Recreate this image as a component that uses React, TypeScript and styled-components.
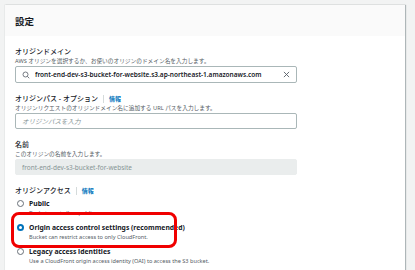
import { FunctionComponent } from 'react';
import styled, { createGlobalStyle } from 'styled-components';

const GlobalStyle = createGlobalStyle`
    html, body {
        margin: 0;
        padding: 0;
        background: rgb(242, 243, 243);
        font-family: "Noto Sans", "Noto Sans CJK JP", sans-serif;
        color: rgb(22, 25, 31);
    }
`;

const Page = styled.div`
    width: 415px;
    height: 270px;
    overflow: hidden;
    padding: 5px 0 0 5px;
    box-sizing: border-box;
`;

const Card = styled.div`
    width: 400px;
    height: 300px;
    background: rgb(255, 255, 255);
    box-shadow: 1px 0 1px rgba(0, 28, 36, 0.25), 0 0 0 0.5px rgba(0, 28, 36, 0.08);
`;

const Header = styled.div`
    height: 31px;
    display: flex;
    align-items: center;
    padding: 0 10px;
    background: rgb(250, 250, 250);
    font-size: 9.5px;
    font-weight: 700;
`;

const Body = styled.div`
    padding: 10px 10px 0 10px;
    display: flex;
    flex-direction: column;
    gap: 10px;
`;

const Field = styled.div`
    display: flex;
    flex-direction: column;
`;

const Label = styled.div`
    font-size: 7px;
    font-weight: 500;
    line-height: 11px;
    display: flex;
    align-items: center;
`;

const Info = styled.span`
    color: rgb(0, 115, 187);
    font-weight: 700;
    font-size: 6px;
    margin-left: 5px;
    padding-left: 5px;
    border-left: 1px solid rgb(213, 219, 219);
    line-height: 8px;
`;

const Description = styled.div`
    font-size: 5.7px;
    line-height: 9px;
    color: rgb(84, 91, 100);
`;

const InputBox = styled.div<{ $height: number; $disabled?: boolean }>`
    width: 282px;
    height: ${p => p.$height}px;
    box-sizing: border-box;
    display: flex;
    align-items: center;
    gap: 5px;
    padding: 0 6px;
    border: 1px solid ${p => (p.$disabled ? 'rgb(234, 237, 237)' : 'rgb(170, 183, 184)')};
    border-radius: 2px;
    background: ${p => (p.$disabled ? 'rgb(234, 237, 237)' : 'rgb(255, 255, 255)')};
    font-size: 6.5px;
`;

const InputText = styled.span<{ $tone?: 'value' | 'placeholder' | 'disabled' }>`
    flex: 1;
    white-space: nowrap;
    overflow: hidden;
    font-weight: ${p => (p.$tone === 'value' || !p.$tone ? 600 : 400)};
    font-style: ${p => (p.$tone === 'placeholder' ? 'italic' : 'normal')};
    color: ${p =>
        p.$tone === 'placeholder'
            ? 'rgb(135, 149, 150)'
            : p.$tone === 'disabled'
              ? 'rgb(135, 149, 150)'
              : 'rgb(22, 25, 31)'};
`;

const RadioGroup = styled.div`
    position: relative;
    display: flex;
    flex-direction: column;
    gap: 4px;
    margin-top: 2px;
`;

const RadioItem = styled.div`
    display: grid;
    grid-template-columns: 7px 1fr;
    column-gap: 5px;
    padding-left: 2px;
`;

const RadioDot = styled.span<{ $checked?: boolean }>`
    width: 7px;
    height: 7px;
    box-sizing: border-box;
    border-radius: 50%;
    margin-top: 2px;
    border: ${p => (p.$checked ? '2.2px solid rgb(0, 115, 187)' : '1.2px solid rgb(105, 112, 120)')};
    background: rgb(255, 255, 255);
`;

const RadioLabel = styled.div`
    font-size: 6.8px;
    font-weight: 700;
    line-height: 11px;
`;

const RadioDesc = styled.div`
    grid-column: 2;
    font-size: 5.6px;
    line-height: 9px;
    color: rgb(84, 91, 100);
`;

const Highlight = styled.div`
    position: absolute;
    left: -4px;
    top: 14px;
    width: 166px;
    height: 36px;
    box-sizing: border-box;
    border: 3px solid rgb(240, 0, 0);
    border-radius: 8px;
    pointer-events: none;
`;

const SearchIcon = () => (
    <svg width="8" height="8" viewBox="0 0 16 16" fill="none" stroke="rgb(84, 91, 100)" strokeWidth="1.6">
        <circle cx="7" cy="7" r="5" />
        <path d="M10.6 10.6 L14.5 14.5" />
    </svg>
);

const ClearIcon = () => (
    <svg width="7" height="7" viewBox="0 0 16 16" fill="none" stroke="rgb(84, 91, 100)" strokeWidth="2">
        <path d="M2 2 L14 14 M14 2 L2 14" />
    </svg>
);

const radios = [
    { label: 'Public', desc: 'Bucket must allow public access.', checked: false },
    { label: 'Origin access control settings (recommended)', desc: 'Bucket can restrict access to only CloudFront.', checked: true },
    { label: 'Legacy access identities', desc: 'Use a CloudFront origin access identity (OAI) to access the S3 bucket.', checked: false },
    { label: '', desc: '', checked: false },
];

const App: FunctionComponent = () => {
    return (
        <>
            <GlobalStyle />
            <Page>
                <Card>
                    <Header>設定</Header>
                    <Body>
                        <Field>
                            <Label>オリジンドメイン</Label>
                            <Description>AWS オリジンを選択するか、お使いのオリジンのドメイン名を入力します。</Description>
                            <InputBox $height={17}>
                                <SearchIcon />
                                <InputText $tone="value">front-end-dev-s3-bucket-for-website.s3.ap-northeast-1.amazonaws.com</InputText>
                                <ClearIcon />
                            </InputBox>
                        </Field>

                        <Field>
                            <Label>
                                オリジンパス - オプション<Info>情報</Info>
                            </Label>
                            <Description>オリジンリクエストのオリジンドメイン名に追加する URL パスを入力します。</Description>
                            <InputBox $height={16}>
                                <InputText $tone="placeholder">オリジンパスを入力</InputText>
                            </InputBox>
                        </Field>

                        <Field>
                            <Label>名前</Label>
                            <Description>このオリジンの名前を入力します。</Description>
                            <InputBox $height={16} $disabled>
                                <InputText $tone="disabled">front-end-dev-s3-bucket-for-website</InputText>
                            </InputBox>
                        </Field>

                        <Field>
                            <Label>
                                オリジンアクセス<Info>情報</Info>
                            </Label>
                            <RadioGroup>
                                {radios.map((r, i) => (
                                    <RadioItem key={i}>
                                        <RadioDot $checked={r.checked} />
                                        <RadioLabel>{r.label}</RadioLabel>
                                        {r.desc && <RadioDesc>{r.desc}</RadioDesc>}
                                    </RadioItem>
                                ))}
                                <Highlight />
                            </RadioGroup>
                        </Field>
                    </Body>
                </Card>
            </Page>
        </>
    );
};

export default App;
